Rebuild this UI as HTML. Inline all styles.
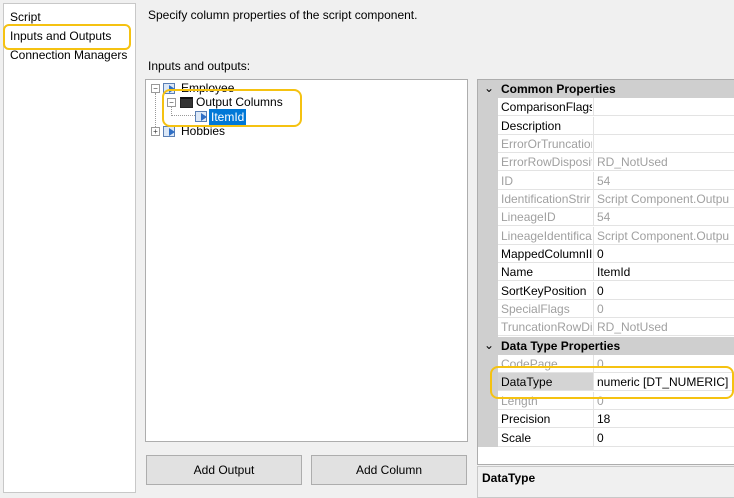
<!DOCTYPE html>
<html><head><style>
body{margin:0;width:734px;height:491px;background:#f0f0f0;font-family:"Liberation Sans",sans-serif;font-size:12px;color:#000;position:relative;overflow:hidden}
.a{position:absolute;white-space:nowrap}
.row{position:absolute;left:498px;width:240px;height:17px;border-bottom:1px solid #e3e3e3;background:#fff}
.row span{position:absolute;top:2px;left:3px;width:91px;overflow:hidden}
.row span.v{left:99px;width:140px}
.row:before{content:"";position:absolute;left:95px;top:0;height:18px;border-left:1px solid #e3e3e3}
.g{color:#a0a0a0}
.hdr{position:absolute;left:478px;width:260px;height:18px;background:#cfcfcf;font-weight:bold}
.btn{position:absolute;top:455px;height:28px;width:154px;background:#e1e1e1;border:1px solid #adadad;text-align:center;line-height:28px}
.ic{position:absolute;width:10px;height:9px;border:1px solid #5a7fb5;background:#dce8f7}
.ic:after{content:"";position:absolute;left:5px;top:1px;border-left:6px solid #2f6fc6;border-top:4px solid transparent;border-bottom:4px solid transparent}
.pm{position:absolute;width:7px;height:7px;border:1px solid #999;background:#fff;font-size:8px;line-height:7px;text-align:center;color:#333}
</style></head><body>
<div class="a" style="left:3px;top:3px;width:131px;height:488px;background:#fff;border:1px solid #c8c8c8"></div>
<div class="a" style="left:10px;top:10px">Script</div>
<div class="a" style="left:10px;top:29px;">Inputs and Outputs</div>
<div class="a" style="left:10px;top:48px">Connection Managers</div>
<div class="a" style="left:3px;top:24px;width:124px;height:22px;border:2px solid #f5c211;border-radius:6px"></div>

<div class="a" style="left:148px;top:8px">Specify column properties of the script component.</div>
<div class="a" style="left:148px;top:59px">Inputs and outputs:</div>

<div class="a" style="left:145px;top:79px;width:321px;height:361px;background:#fff;border:1px solid #adadad"></div>
<div class="pm" style="left:151px;top:84px">−</div>
<div class="ic" style="left:163px;top:83px"></div>
<div class="a" style="left:181px;top:81px">Employee</div>
<div class="a" style="left:155px;top:93px;height:38px;border-left:1px dotted #999"></div>
<div class="pm" style="left:167px;top:98px">−</div>
<div class="a" style="left:180px;top:97px;width:11px;height:8px;background:#333;border:1px solid #222;border-top:2px solid #111"></div>
<div class="a" style="left:196px;top:95px">Output Columns</div>
<div class="a" style="left:171px;top:107px;height:8px;border-left:1px dotted #999;border-bottom:1px dotted #999;width:23px"></div>
<div class="ic" style="left:195px;top:111px"></div>
<div class="a" style="left:209px;top:109px;background:#0078d7;color:#fff;padding:1px 2px">ItemId</div>
<div class="pm" style="left:151px;top:127px">+</div>
<div class="ic" style="left:163px;top:126px"></div>
<div class="a" style="left:181px;top:124px">Hobbies</div>
<div class="a" style="left:162px;top:89px;width:136px;height:34px;border:2px solid #f5c211;border-radius:8px"></div>

<div class="btn" style="left:146px">Add Output</div>
<div class="btn" style="left:311px">Add Column</div>

<div class="a" style="left:477px;top:79px;width:260px;height:384px;background:#fff;border:1px solid #adadad"></div>
<div class="a" style="left:478px;top:80px;width:20px;height:367px;background:#cfcfcf"></div>
<div class="hdr" style="top:80px"><span class="a" style="left:6px;top:1px;font-weight:normal">⌄</span><span class="a" style="left:23px;top:2px">Common Properties</span></div>
<div class="row" style="top:98px"><span>ComparisonFlags</span></div>
<div class="row" style="top:117px"><span>Description</span></div>
<div class="row g" style="top:135px"><span>ErrorOrTruncation</span></div>
<div class="row g" style="top:153px"><span>ErrorRowDisposit</span><span class="v">RD_NotUsed</span></div>
<div class="row g" style="top:172px"><span>ID</span><span class="v">54</span></div>
<div class="row g" style="top:190px"><span>IdentificationStrir</span><span class="v">Script Component.Outpu</span></div>
<div class="row g" style="top:208px"><span>LineageID</span><span class="v">54</span></div>
<div class="row g" style="top:227px"><span>LineageIdentifica</span><span class="v">Script Component.Outpu</span></div>
<div class="row" style="top:245px"><span>MappedColumnII</span><span class="v">0</span></div>
<div class="row" style="top:263px"><span>Name</span><span class="v">ItemId</span></div>
<div class="row" style="top:282px"><span>SortKeyPosition</span><span class="v">0</span></div>
<div class="row g" style="top:300px"><span>SpecialFlags</span><span class="v">0</span></div>
<div class="row g" style="top:318px"><span>TruncationRowDi</span><span class="v">RD_NotUsed</span></div>
<div class="hdr" style="top:337px"><span class="a" style="left:6px;top:1px;font-weight:normal">⌄</span><span class="a" style="left:23px;top:2px">Data Type Properties</span></div>
<div class="row g" style="top:355px"><span>CodePage</span><span class="v">0</span></div>
<div class="row" style="top:373px"><span style="left:0;top:0;width:95px;height:17px;background:#d4d4d4;padding:2px 3px;box-sizing:border-box">DataType</span><span class="v">numeric [DT_NUMERIC]</span></div>
<div class="row g" style="top:392px"><span>Length</span><span class="v">0</span></div>
<div class="row" style="top:410px"><span>Precision</span><span class="v">18</span></div>
<div class="row" style="top:429px"><span>Scale</span><span class="v">0</span></div>
<div class="a" style="left:490px;top:366px;width:240px;height:29px;border:2px solid #f5c211;border-radius:8px"></div>

<div class="a" style="left:477px;top:466px;width:260px;height:30px;background:#f0f0f0;border:1px solid #c8c8c8"></div>
<div class="a" style="left:482px;top:471px;font-weight:bold">DataType</div>
</body></html>
